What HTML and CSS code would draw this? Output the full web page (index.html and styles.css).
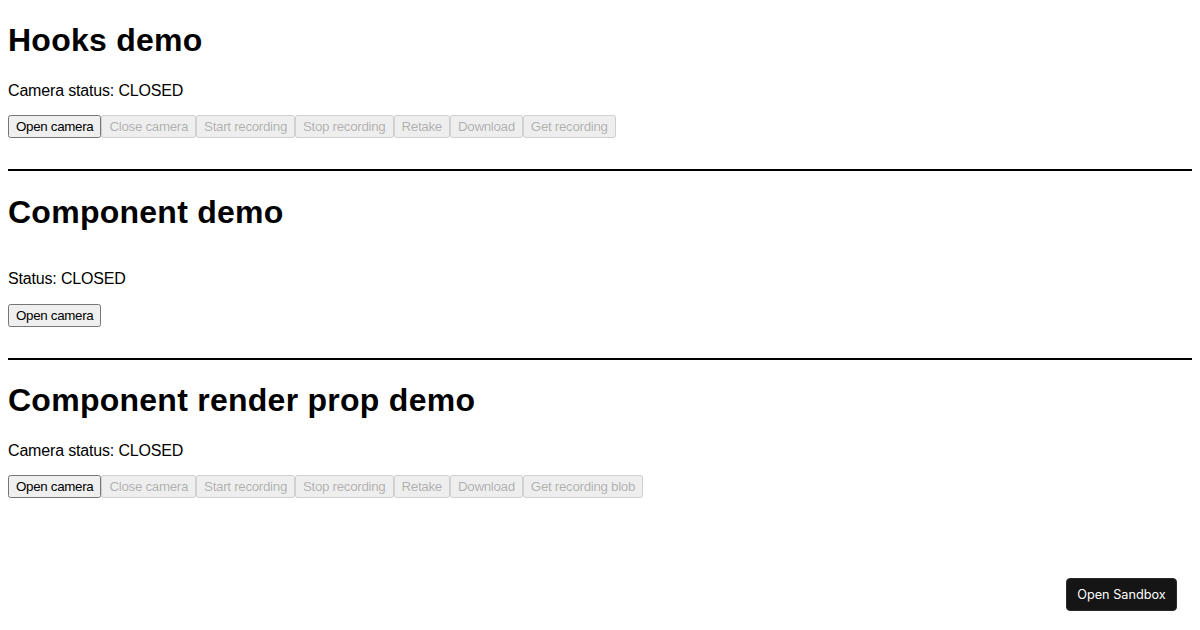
FILE: index.html
```html
<!DOCTYPE html>
<html>
<head>
<meta charset="utf-8">
<link rel="stylesheet" href="styles.css">
</head>
<body>
<section class="demo">
<h1 class="title">Hooks demo</h1>
<p class="status">Camera status: CLOSED</p>
<div class="controls"><button class="btn">Open camera</button><button class="btn" disabled>Close camera</button><button class="btn" disabled>Start recording</button><button class="btn" disabled>Stop recording</button><button class="btn" disabled>Retake</button><button class="btn" disabled>Download</button><button class="btn" disabled>Get recording</button></div>
</section>
<hr class="rule">
<section class="demo">
<h1 class="title">Component demo</h1>
<p class="status status-gap">Status: CLOSED</p>
<div class="controls"><button class="btn">Open camera</button></div>
</section>
<hr class="rule">
<section class="demo">
<h1 class="title">Component render prop demo</h1>
<p class="status">Camera status: CLOSED</p>
<div class="controls"><button class="btn">Open camera</button><button class="btn" disabled>Close camera</button><button class="btn" disabled>Start recording</button><button class="btn" disabled>Stop recording</button><button class="btn" disabled>Retake</button><button class="btn" disabled>Download</button><button class="btn" disabled>Get recording blob</button></div>
</section>
<button class="sandbox">Open Sandbox</button>
</body>
</html>
```
FILE: styles.css
```css
html {
  margin: 0;
  padding: 0;
}
body {
  margin: 0;
  padding: 0 8px;
  display: flow-root;
  font-family: "Liberation Sans", Arial, sans-serif;
  font-size: 16px;
  color: #000;
  background: #fff;
}
.title {
  font-size: 32px;
  line-height: 38.4px;
  font-weight: bold;
  letter-spacing: 0.26px;
  margin: 21.44px 0;
}
.status {
  line-height: 19.2px;
  letter-spacing: -0.17px;
  margin: 16px 0 15px;
}
.status-gap {
  margin-top: 38px;
}
.controls {
  display: flex;
  margin-bottom: 31px;
}
.btn {
  font-family: "Liberation Sans", Arial, sans-serif;
  font-size: 13.333px;
  letter-spacing: -0.3px;
  padding: 2px 6px;
}
.rule {
  border: none;
  border-top: 2px solid #000;
  margin: 8px 0;
}
.sandbox {
  position: fixed;
  right: 23px;
  bottom: 19px;
  width: 111px;
  height: 33px;
  background: #151515;
  color: #fff;
  border: 1px solid #2a2a2a;
  border-radius: 4px;
  font-family: Inter, "Liberation Sans", sans-serif;
  font-size: 12.7px;
  padding: 0;
}
```
